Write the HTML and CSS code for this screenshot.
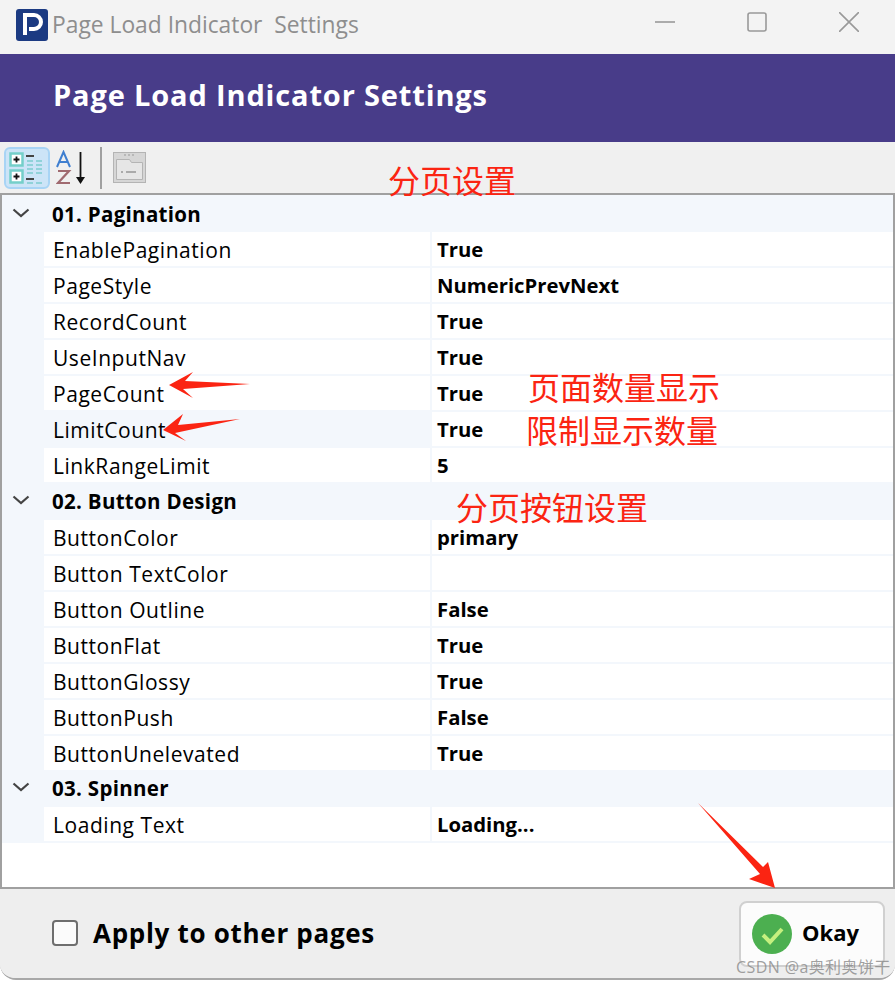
FILE: index.html
```html
<!DOCTYPE html>
<html lang="zh">
<head>
<meta charset="utf-8">
<title>Page Load Indicator Settings</title>
<link rel="stylesheet" href="styles.css">
</head>
<body>
<div class="window">
  <div class="titlebar">
    <svg class="app-icon" viewBox="0 0 32 32"><rect width="32" height="32" rx="3" fill="#1b3a82"/><path d="M9 26V6h9a6.500 6.500 0 0 1 0 14h-5" fill="none" stroke="#fff" stroke-width="4"/></svg>
    <span class="title-text">Page Load Indicator&nbsp; Settings</span>
    <div class="win-controls">
      <svg class="win-btn" viewBox="0 0 20 20"><path d="M0 10h20" stroke="#999" stroke-width="1.600"/></svg>
      <svg class="win-btn" viewBox="0 0 20 20"><rect x="1" y="1" width="18" height="18" rx="2" fill="none" stroke="#999" stroke-width="1.600"/></svg>
      <svg class="win-btn" viewBox="0 0 20 20"><path d="M0 0l20 20M20 0L0 20" stroke="#999" stroke-width="1.600"/></svg>
    </div>
  </div>
  <div class="banner">Page Load Indicator Settings</div>
  <div class="toolbar">
    <div class="tool-active">
      <svg width="38" height="34" viewBox="0 0 38 34">
        <rect x="2.500" y="2.500" width="12" height="12" fill="#fff" stroke="#74cfca" stroke-width="2.500"/>
        <rect x="2.500" y="19.500" width="12" height="12" fill="#fff" stroke="#74cfca" stroke-width="2.500"/>
        <path d="M5.500 8.500h6M8.500 5.500v6M5.500 25.500h6M8.500 22.500v6" stroke="#111" stroke-width="1.800"/>
        <path d="M18 5h8M18 28h8" stroke="#444" stroke-width="1.800"/>
        <path d="M19 10h6M28 10h6M19 14h6M28 14h6M19 18h6M28 18h6M19 22h6M28 22h6M19 32h6M28 32h6" stroke="#7ccbd0" stroke-width="1.500"/>
      </svg>
    </div>
    <div class="tool-sort">
      <svg width="34" height="36" viewBox="0 0 34 36">
        <path d="M1 17L7.500 2 14 17M3.500 12h8" fill="none" stroke="#3f7fd0" stroke-width="2"/>
        <path d="M2 21h11L2 33h12" fill="none" stroke="#a06a70" stroke-width="2.200"/>
        <path d="M24.500 2v28" stroke="#111" stroke-width="1.800"/><path d="M20 27h9l-4.500 7z" fill="#111"/>
      </svg>
    </div>
    <div class="tool-sep"></div>
    <svg class="tool-pages" width="33" height="31" viewBox="0 0 33 31">
      <rect x=".5" y=".5" width="32" height="30" fill="#d6d6d6" stroke="#b4b4b4"/>
      <path d="M11 3h2M15 3h2M19 3h2" stroke="#999"/>
      <path d="M3.500 7.500h13l2 3h11v17h-26z" fill="#e6e6e6" stroke="#b4b4b4"/>
      <path d="M8 20h2M13 20h10" stroke="#aaa" stroke-width="2"/>
    </svg>
  </div>
  <div class="grid">
    <div class="group group-first"><svg class="chev" viewBox="0 0 18 10"><path d="M1.500 1.500L9 8l7.500-6.500" fill="none" stroke="#444" stroke-width="2.200"/></svg><span class="group-name">01. Pagination</span></div>
    <div class="row"><span class="name">EnablePagination</span><span class="val">True</span></div>
    <div class="row"><span class="name">PageStyle</span><span class="val">NumericPrevNext</span></div>
    <div class="row"><span class="name">RecordCount</span><span class="val">True</span></div>
    <div class="row"><span class="name">UseInputNav</span><span class="val">True</span></div>
    <div class="row"><span class="name">PageCount</span><span class="val">True</span></div>
    <div class="row row-selected"><span class="name">LimitCount</span><span class="val">True</span></div>
    <div class="row"><span class="name">LinkRangeLimit</span><span class="val">5</span></div>
    <div class="group"><svg class="chev" viewBox="0 0 18 10"><path d="M1.500 1.500L9 8l7.500-6.500" fill="none" stroke="#444" stroke-width="2.200"/></svg><span class="group-name">02. Button Design</span></div>
    <div class="row"><span class="name">ButtonColor</span><span class="val">primary</span></div>
    <div class="row"><span class="name">Button TextColor</span><span class="val"></span></div>
    <div class="row"><span class="name">Button Outline</span><span class="val">False</span></div>
    <div class="row"><span class="name">ButtonFlat</span><span class="val">True</span></div>
    <div class="row"><span class="name">ButtonGlossy</span><span class="val">True</span></div>
    <div class="row"><span class="name">ButtonPush</span><span class="val">False</span></div>
    <div class="row row-short"><span class="name">ButtonUnelevated</span><span class="val">True</span></div>
    <div class="group"><svg class="chev" viewBox="0 0 18 10"><path d="M1.500 1.500L9 8l7.500-6.500" fill="none" stroke="#444" stroke-width="2.200"/></svg><span class="group-name">03. Spinner</span></div>
    <div class="row"><span class="name">Loading Text</span><span class="val">Loading...</span></div>
  </div>
  <div class="footer">
    <label class="apply"><span class="check"></span><span>Apply to other pages</span></label>
    <div class="okay">
      <svg width="40" height="40" viewBox="0 0 40 40"><circle cx="20" cy="20" r="20" fill="#4caf50"/><path d="M11 21l7 7 12-13" fill="none" stroke="#c5f07f" stroke-width="4"/></svg>
      <span class="okay-label">Okay</span>
    </div>
  </div>
</div>

<span class="note note-paging">分页设置</span>
<span class="note note-count">页面数量显示</span>
<span class="note note-limit">限制显示数量</span>
<span class="note note-button">分页按钮设置</span>
<svg class="arrow arrow-page" width="82" height="28" viewBox="0 0 82 28"><path d="M0 13L24 0l-8 9 65 3-67 5 10 9z" fill="#fb2412"/></svg>
<svg class="arrow arrow-limit" width="80" height="28" viewBox="0 0 80 28"><path d="M1 16L21 0l-5 11 62-6-65 14 11 8z" fill="#fb2412"/></svg>
<svg class="arrow arrow-okay" width="80" height="88" viewBox="0 0 80 88"><path d="M0 1L65 65l5-5 7 26-26-9 11-5z" fill="#fb2412"/></svg>
<span class="watermark">CSDN @a奥利奥饼干</span>
</body>
</html>
```
FILE: styles.css
```css
* { box-sizing: border-box; }
html, body { margin: 0; padding: 0; }
body {
  width: 896px;
  height: 982px;
  position: relative;
  overflow: hidden;
  background: #fff;
  font-family: "Open Sans", "Noto Sans", "Noto Sans CJK SC", sans-serif;
  color: #000;
}
.window {
  width: 895px;
  height: 980px;
  display: flex;
  flex-direction: column;
  background: #f0f0f0;
  border-bottom: 2px solid #a8a8a8;
  border-radius: 0 0 16px 16px;
  overflow: hidden;
}
.titlebar {
  height: 54px;
  flex: none;
  display: flex;
  align-items: center;
  padding-left: 16px;
  background: #f3f3f3;
}
.app-icon { width: 32px; height: 32px; flex: none; margin-top: -4px; }
.title-text { margin-left: 4px; font-size: 22.800px; color: #8e8e8e; margin-top: -5px; }
.win-controls {
  margin-left: auto;
  display: flex;
  gap: 72px;
  padding-right: 36px;
  margin-top: -10px;
}
.win-btn { width: 20px; height: 20px; display: block; }
.banner {
  height: 88px;
  flex: none;
  display: flex;
  align-items: center;
  padding-left: 53px;
  background: #483c89;
  color: #fff;
  font-size: 29px;
  letter-spacing: .85px;
  font-weight: 700;
  padding-bottom: 8px;
}
.toolbar {
  height: 51px;
  flex: none;
  display: flex;
  align-items: center;
  padding-left: 4px;
  background: #f0f0f0;
}
.tool-active {
  width: 46px;
  height: 42px;
  display: flex;
  align-items: center;
  justify-content: center;
  background: #cce4f7;
  border: 2px solid #a8d4f5;
  border-radius: 6px;
}
.tool-sort { width: 34px; height: 36px; margin-left: 6px; }
.tool-sep { width: 2px; height: 42px; background: #a0a0a0; margin-left: 10px; }
.tool-pages { margin-left: 11px; }
.grid {
  height: 696px;
  flex: none;
  background: #fff;
  border: 2px solid #a0a0a0;
}
.group {
  height: 36px;
  display: flex;
  align-items: center;
  background: #f3f7fc;
  font-weight: 700;
  font-size: 20.500px;
  letter-spacing: .3px;
}
.group-first { height: 37px; padding-top: 2px; }
.chev { width: 18px; height: 10px; margin-left: 10px; flex: none; margin-top: -4px; }
.group-name { margin-left: 22px; margin-top: -2px; }
.row {
  height: 36px;
  display: flex;
  background: #f3f7fc;
  padding-left: 42px;
  font-size: 20.500px;
}
.row-short { height: 35px; }
.name, .val {
  display: flex;
  align-items: center;
  background: #fff;
  height: 34px;
  white-space: pre;
}
.name { width: 386px; padding: 1px 0 0 9px; font-size: 21px; letter-spacing: .55px; }
.val { flex: 1; margin-left: 2px; padding-left: 5px; font-size: 20.300px; font-weight: 700; }
.row-selected .name { background: #f3f7fc; }
.footer {
  flex: 1;
  display: flex;
  align-items: center;
  justify-content: space-between;
  padding: 0 10px 0 52px;
  background: #eeeeee;
}
.apply {
  display: flex;
  align-items: center;
  gap: 15px;
  font-size: 26px;
  letter-spacing: .7px;
  font-weight: 700;
  padding-bottom: 2px;
}
.check {
  width: 26px;
  height: 26px;
  background: #fbfbfb;
  border: 2px solid #6e6e6e;
  border-radius: 4px;
}
.okay {
  width: 146px;
  height: 66px;
  display: flex;
  align-items: center;
  gap: 10px;
  padding-left: 11px;
  background: #fcfcfc;
  border: 2px solid #d0d0d0;
  border-radius: 8px;
  font-size: 22px;
  font-weight: 700;
}
.okay-label { padding-bottom: 4px; }
.note {
  position: absolute;
  color: #fb2412;
  font-family: "Noto Sans CJK SC", sans-serif;
  font-size: 32px;
  line-height: 40px;
  white-space: nowrap;
}
.note-paging { left: 388px; top: 159px; }
.note-count { left: 528px; top: 366px; }
.note-limit { left: 526px; top: 409px; }
.note-button { left: 456px; top: 486px; }
.arrow { position: absolute; display: block; }
.arrow-page { left: 169px; top: 372px; }
.arrow-limit { left: 162px; top: 414px; }
.arrow-okay { left: 698px; top: 802px; }
.watermark {
  position: absolute;
  left: 736px;
  top: 957px;
  font-size: 16px;
  letter-spacing: .4px;
  line-height: 20px;
  color: rgba(130, 130, 130, .75);
  white-space: nowrap;
}
```
